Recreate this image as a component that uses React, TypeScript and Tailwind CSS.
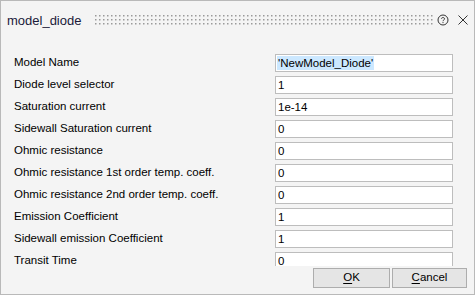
import { FC } from 'react'

const ROWS: { label: string; value: string; selected?: boolean }[] = [
  { label: 'Model Name', value: "'NewModel_Diode'", selected: true },
  { label: 'Diode level selector', value: '1' },
  { label: 'Saturation current', value: '1e-14' },
  { label: 'Sidewall Saturation current', value: '0' },
  { label: 'Ohmic resistance', value: '0' },
  { label: 'Ohmic resistance 1st order temp. coeff.', value: '0' },
  { label: 'Ohmic resistance 2nd order temp. coeff.', value: '0' },
  { label: 'Emission Coefficient', value: '1' },
  { label: 'Sidewall emission Coefficient', value: '1' },
  { label: 'Transit Time', value: '0' },
]

const Grip: FC = () => (
  <svg width="340" height="12" className="block">
    <defs>
      <pattern id="dots" width="4" height="4" patternUnits="userSpaceOnUse">
        <rect x="0" y="0" width="1.5" height="1.5" fill="#9a9a9a" />
      </pattern>
    </defs>
    <rect x="0" y="0" width="340" height="12" fill="url(#dots)" />
  </svg>
)

const HelpIcon: FC = () => (
  <svg width="12" height="12" viewBox="0 0 12 12" className="block">
    <circle cx="6" cy="6" r="5" fill="none" stroke="#333" strokeWidth="1" />
    <path d="M4.4 4.7 C4.4 3.2 7.6 3.2 7.6 4.8 C7.6 5.9 6 5.9 6 7.2" fill="none" stroke="#333" strokeWidth="1" />
    <rect x="5.5" y="8.1" width="1" height="1" fill="#333" />
  </svg>
)

const CloseIcon: FC = () => (
  <svg width="10" height="10" viewBox="0 0 10 10" className="block">
    <path d="M0.5 0.5 L9.5 9.5 M9.5 0.5 L0.5 9.5" stroke="#333" strokeWidth="1" />
  </svg>
)

const App: FC = () => {
  return (
    <div className="h-[296px] w-[476px] bg-white font-['Liberation_Sans',Arial,sans-serif]">
      <div className="flex h-[295px] w-[475px] flex-col border border-[#b9b9b9] bg-[#f4f4f4]">
        {/* TITLE BAR */}
        <div className="flex h-[39px] shrink-0 items-center">
          <span className="ml-[6px] w-[88px] text-[13px] leading-none text-[#1a1a3a]">model_diode</span>
          <div className="mt-[1px]">
            <Grip />
          </div>
          <div className="ml-[2px] mt-[-1px]">
            <HelpIcon />
          </div>
          <div className="ml-[9px] mt-[-1px]">
            <CloseIcon />
          </div>
        </div>

        {/* PARAMETERS */}
        <div className="h-[226px] shrink-0 overflow-hidden pt-[12px]">
          {ROWS.map((row) => (
            <div key={row.label} className="flex h-[22px] items-center">
              <span className="w-[274px] pl-[13px] text-[11.5px] text-black">{row.label}</span>
              <div className="flex h-[18px] w-[178px] items-center border border-[#bdbdbd] bg-white pl-[1px] text-[11.5px] text-black">
                <span className={row.selected ? 'bg-[#cce8ff] px-[1px] leading-[14px]' : 'px-[1px] leading-[14px]'}>
                  {row.value}
                </span>
              </div>
            </div>
          ))}
        </div>

        {/* BUTTONS */}
        <div className="flex justify-end gap-[2px] pr-[7px] pt-[2px]">
          <button className="h-[20px] w-[77px] border border-[#adadad] bg-[#e5e5e5] text-[11.5px] text-black">
            <span className="underline underline-offset-2">O</span>K
          </button>
          <button className="h-[20px] w-[75px] border border-[#adadad] bg-[#e5e5e5] text-[11.5px] text-black">
            <span className="underline underline-offset-2">C</span>ancel
          </button>
        </div>
      </div>
    </div>
  )
}

export default App
